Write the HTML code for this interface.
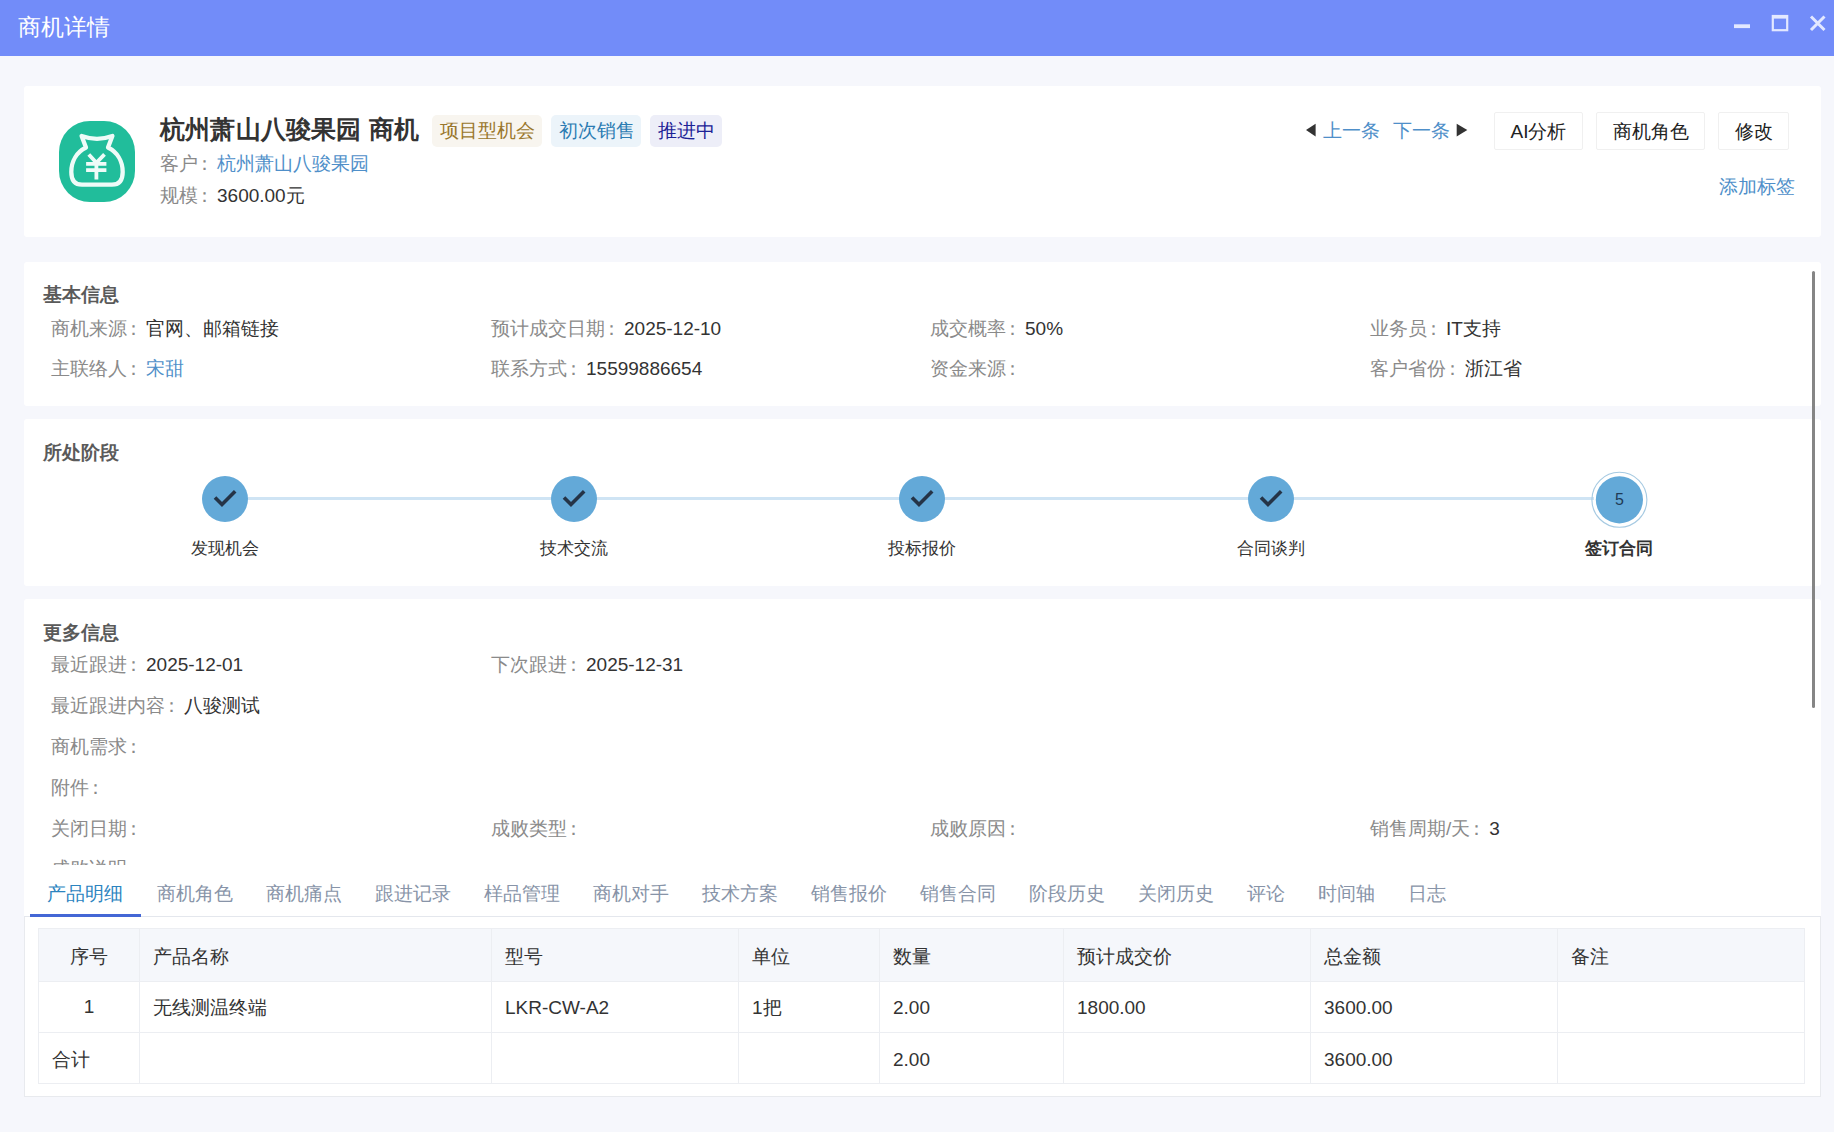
<!DOCTYPE html>
<html><head><meta charset="utf-8">
<style>
*{box-sizing:border-box;margin:0;padding:0}
html,body{width:1834px;height:1132px;overflow:hidden;background:#f6f7fc;font-family:"Liberation Sans",sans-serif;color:#333}
.abs{position:absolute}
.tx{position:absolute;white-space:nowrap;line-height:1}
#titlebar{position:absolute;left:0;top:0;width:1834px;height:56px;background:#728cf9}
.card{position:absolute;left:24px;width:1797px;background:#fff;border-radius:3px}
.lb{color:#8a8a8a}
.c{font-style:normal;position:relative;left:-3.5px}
.vl{color:#333}
.lk{color:#4f8fc9}
.sec{position:absolute;left:43px;font-size:18.5px;font-weight:bold;color:#5a5a5a;line-height:1;white-space:nowrap}
.row{position:absolute;font-size:19px;line-height:1;white-space:nowrap}
.tag{position:absolute;top:115px;height:32px;line-height:32px;font-size:19px;border-radius:5px;padding:0 8px;white-space:nowrap}
.btn{position:absolute;top:112px;height:38px;line-height:38px;font-size:19px;border:1px solid #f0f0f0;border-radius:2px;text-align:center;color:#222;background:#fff;white-space:nowrap}
.step{position:absolute;top:476px;width:46px;height:46px;border-radius:50%;background:#63a9d8}
.slab{position:absolute;top:540px;font-size:17.4px;line-height:1;color:#333;white-space:nowrap;transform:translateX(-50%)}
.tab{position:absolute;top:884px;font-size:19.3px;line-height:1;color:#8894a8;white-space:nowrap}
table{position:absolute;left:38px;top:928px;border-collapse:collapse;font-size:19px;color:#333}
td,th{border:1px solid #eceef2;height:51px;padding:3px 0 0 13px;text-align:left;font-weight:normal;white-space:nowrap}
th{background:#f5f7fb;height:53px}
.r1 td{padding-top:1px}
</style></head>
<body>
<div id="titlebar">
<div class="tx" style="left:18px;top:16px;font-size:23px;color:#fff">商机详情</div>
<svg class="abs" style="left:1720px;top:0" width="114" height="56" viewBox="0 0 114 56">
<rect x="14" y="24.3" width="16" height="3.8" fill="#e3e8ff"/>
<rect x="52.8" y="16" width="14.4" height="14.2" fill="none" stroke="#e3e8ff" stroke-width="2.2"/>
<rect x="52" y="15" width="16" height="3.6" fill="#e3e8ff"/>
<path d="M91 16.5 L104.5 30 M104.5 16.5 L91 30" stroke="#e3e8ff" stroke-width="3"/>
</svg>
</div>

<!-- header card -->
<div class="card" style="top:86px;height:151px"></div>
<svg class="abs" style="left:59px;top:121px" width="76" height="81" viewBox="0 0 76 81">
<rect x="0" y="0" width="76" height="81" rx="31" ry="31" fill="#21bd9b"/>
<path d="M22.6 15 Q38 20.6 53.4 15 L49 26.5 C58 31 63.7 40 63.7 51 C63.7 60 60 63.7 53 63.7 L23 63.7 C16 63.7 12.3 60 12.3 51 C12.3 40 18 31 27 26.5 Z" fill="none" stroke="#effbf8" stroke-width="4.3" stroke-linejoin="round"/>
<path d="M29.8 33.4 L37.4 41.8 L45.5 33.4 M27.1 42.8 H47.4 M27.1 49.2 H47.4 M37.4 41.8 V58.6" fill="none" stroke="#effbf8" stroke-width="3.8"/>
</svg>
<div class="tx" style="left:160px;top:117px;font-size:25px;letter-spacing:0.2px;font-weight:bold;color:#333">杭州萧山八骏果园 商机</div>
<div class="tag" style="left:432px;width:110px;background:#f8f5ef;color:#9a772c">项目型机会</div>
<div class="tag" style="left:551px;width:90px;background:#ecf4fa;color:#2c7cb3">初次销售</div>
<div class="tag" style="left:650px;width:72px;background:#edeef8;color:#1c2296">推进中</div>
<div class="row" style="left:160px;top:154px"><span class="lb">客户<i class="c">：</i></span><span class="lk">杭州萧山八骏果园</span></div>
<div class="row" style="left:160px;top:186px"><span class="lb">规模<i class="c">：</i></span><span class="vl">3600.00元</span></div>

<svg class="abs" style="left:1300px;top:118px" width="180" height="24" viewBox="0 0 180 24">
<path d="M6 12 L15.6 5.8 L15.6 18.6 Z" fill="#333"/>
<path d="M167.3 12 L156.7 5.8 L156.7 18.6 Z" fill="#333"/>
</svg>
<div class="row lk" style="left:1323px;top:121px">上一条</div>
<div class="row lk" style="left:1393px;top:121px">下一条</div>
<div class="btn" style="left:1494px;width:89px">AI分析</div>
<div class="btn" style="left:1596px;width:109px">商机角色</div>
<div class="btn" style="left:1718px;width:71px">修改</div>
<div class="row lk" style="left:1719px;top:177px">添加标签</div>

<!-- basic info -->
<div class="card" style="top:262px;height:144px"></div>
<div class="sec" style="top:286px">基本信息</div>
<div class="row" style="left:51px;top:319px"><span class="lb">商机来源<i class="c">：</i></span><span class="vl">官网、邮箱链接</span></div>
<div class="row" style="left:491px;top:319px"><span class="lb">预计成交日期<i class="c">：</i></span><span class="vl">2025-12-10</span></div>
<div class="row" style="left:930px;top:319px"><span class="lb">成交概率<i class="c">：</i></span><span class="vl">50%</span></div>
<div class="row" style="left:1370px;top:319px"><span class="lb">业务员<i class="c">：</i></span><span class="vl">IT支持</span></div>
<div class="row" style="left:51px;top:359px"><span class="lb">主联络人<i class="c">：</i></span><span class="lk">宋甜</span></div>
<div class="row" style="left:491px;top:359px"><span class="lb">联系方式<i class="c">：</i></span><span class="vl">15599886654</span></div>
<div class="row" style="left:930px;top:359px"><span class="lb">资金来源<i class="c">：</i></span></div>
<div class="row" style="left:1370px;top:359px"><span class="lb">客户省份<i class="c">：</i></span><span class="vl">浙江省</span></div>

<!-- stage -->
<div class="card" style="top:419px;height:167px"></div>
<div class="sec" style="top:444px">所处阶段</div>
<div class="abs" style="left:248px;top:497px;width:1346px;height:3px;background:#cfe4f4"></div>
<div class="step" style="left:202px"></div>
<div class="step" style="left:551px"></div>
<div class="step" style="left:899px"></div>
<div class="step" style="left:1248px"></div>
<svg class="abs" style="left:0;top:470px" width="1834" height="60">
<g fill="none" stroke="#253447" stroke-width="3.6">
<path d="M215 27.4 L222 34.5 L235.2 21.2"/>
<path d="M564 27.4 L571 34.5 L584.2 21.2"/>
<path d="M912 27.4 L919 34.5 L932.2 21.2"/>
<path d="M1261 27.4 L1268 34.5 L1281.2 21.2"/>
</g>
<circle cx="1619.4" cy="29.8" r="27.5" fill="none" stroke="#a6cae2" stroke-width="1.1"/>
<circle cx="1619.4" cy="29.8" r="23.6" fill="#63a9d8"/>
</svg>
<div class="tx" style="left:1615px;top:492px;font-size:16px;color:#1f3a55">5</div>
<div class="slab" style="left:225px">发现机会</div>
<div class="slab" style="left:574px">技术交流</div>
<div class="slab" style="left:922px">投标报价</div>
<div class="slab" style="left:1271px">合同谈判</div>
<div class="slab" style="left:1619px;font-weight:bold">签订合同</div>

<!-- more info -->
<div class="card" style="top:599px;height:498px"></div>
<div class="sec" style="top:624px">更多信息</div>
<div class="row" style="left:51px;top:655px"><span class="lb">最近跟进<i class="c">：</i></span><span class="vl">2025-12-01</span></div>
<div class="row" style="left:491px;top:655px"><span class="lb">下次跟进<i class="c">：</i></span><span class="vl">2025-12-31</span></div>
<div class="row" style="left:51px;top:696px"><span class="lb">最近跟进内容<i class="c">：</i></span><span class="vl">八骏测试</span></div>
<div class="row" style="left:51px;top:737px"><span class="lb">商机需求<i class="c">：</i></span></div>
<div class="row" style="left:51px;top:778px"><span class="lb">附件<i class="c">：</i></span></div>
<div class="row" style="left:51px;top:819px"><span class="lb">关闭日期<i class="c">：</i></span></div>
<div class="row" style="left:491px;top:819px"><span class="lb">成败类型<i class="c">：</i></span></div>
<div class="row" style="left:930px;top:819px"><span class="lb">成败原因<i class="c">：</i></span></div>
<div class="row" style="left:1370px;top:819px"><span class="lb">销售周期/天<i class="c">：</i></span><span class="vl">3</span></div>
<div class="abs" style="left:24px;top:850px;width:1780px;height:15px;overflow:hidden">
<div class="row" style="left:27px;top:9px"><span class="lb">成败说明<i class="c">：</i></span></div>
</div>
<div class="abs" style="left:1812px;top:271px;width:3px;height:437px;border-radius:2px;background:#858585"></div>

<!-- tabs -->
<div class="tab" style="left:47px;color:#2c84bf">产品明细</div>
<div class="tab" style="left:157px">商机角色</div>
<div class="tab" style="left:266px">商机痛点</div>
<div class="tab" style="left:375px">跟进记录</div>
<div class="tab" style="left:484px">样品管理</div>
<div class="tab" style="left:593px">商机对手</div>
<div class="tab" style="left:702px">技术方案</div>
<div class="tab" style="left:811px">销售报价</div>
<div class="tab" style="left:920px">销售合同</div>
<div class="tab" style="left:1029px">阶段历史</div>
<div class="tab" style="left:1138px">关闭历史</div>
<div class="tab" style="left:1247px">评论</div>
<div class="tab" style="left:1318px">时间轴</div>
<div class="tab" style="left:1408px">日志</div>
<div class="abs" style="left:24px;top:916px;width:1797px;height:181px;border:1px solid #e8eaee;border-top-color:#e4e7ed;background:#fff"></div>
<div class="abs" style="left:30px;top:914px;width:111px;height:3px;background:#4467d5"></div>

<table>
<colgroup><col style="width:101px"><col style="width:352px"><col style="width:247px"><col style="width:141px"><col style="width:184px"><col style="width:247px"><col style="width:247px"><col style="width:247px"></colgroup>
<tr><th style="text-align:center;padding:3px 0 0 0">序号</th><th>产品名称</th><th>型号</th><th>单位</th><th>数量</th><th>预计成交价</th><th>总金额</th><th>备注</th></tr>
<tr class="r1"><td style="text-align:center;padding:0">1</td><td>无线测温终端</td><td>LKR-CW-A2</td><td>1把</td><td>2.00</td><td>1800.00</td><td>3600.00</td><td></td></tr>
<tr><td>合计</td><td></td><td></td><td></td><td>2.00</td><td></td><td>3600.00</td><td></td></tr>
</table>
</body></html>
